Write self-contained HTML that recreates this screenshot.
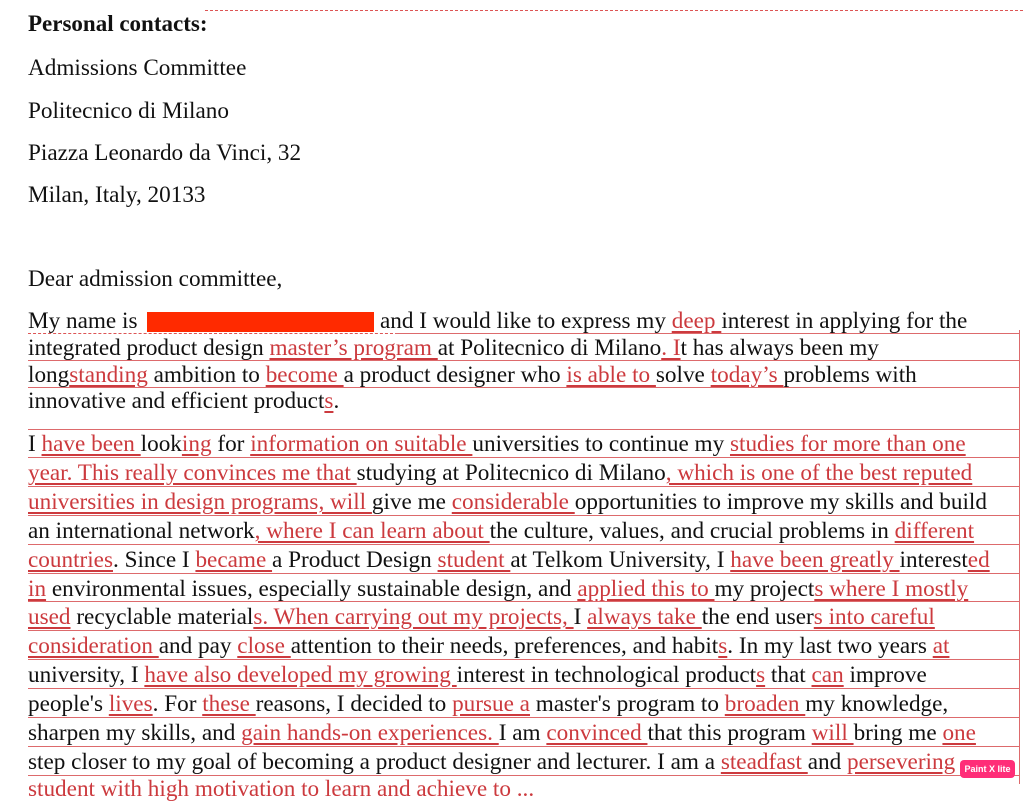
<!DOCTYPE html>
<html><head><meta charset="utf-8"><style>
body{margin:0;width:1023px;height:784px;overflow:hidden;background:#fff;font-family:"Liberation Serif",serif;font-size:23.2px;color:#111;position:relative}
.l{position:absolute;left:28px;white-space:nowrap;line-height:24px}
.r{color:#cc3a3e;text-decoration:underline;text-decoration-color:#cc3a3e;text-underline-offset:3px}
.u{position:absolute;left:28px;right:3px;height:1px;background:#dd6a6c}
</style></head><body>
<div style="position:absolute;left:205px;right:0;top:10px;border-top:1px dashed #dd5555"></div>
<div class="l" style="top:12px;font-size:23px"><b>Personal contacts:</b></div>
<div class="l" style="top:56px">Admissions Committee</div>
<div class="l" style="top:99px">Politecnico di Milano</div>
<div class="l" style="top:141px">Piazza Leonardo da Vinci, 32</div>
<div class="l" style="top:183px">Milan, Italy, 20133</div>
<div class="l" style="top:267px">Dear admission committee,</div>

<div class="l" style="top:309px">My name is </div>
<div class="l" style="top:309px;left:380px">and I would like to express my <span class="r">deep </span>interest in applying for the</div>
<div style="position:absolute;left:147px;top:312px;width:227px;height:20px;background:#ff2a00"></div>
<div style="position:absolute;left:28px;width:370px;top:333px;border-top:1px dashed #dd5555"></div>
<div class="u" style="left:395px;top:333px"></div>
<div class="l" style="top:336px">integrated product design <span class="r">master’s program </span>at Politecnico di Milano<span class="r">. I</span>t has always been my</div>
<div class="u" style="top:360px"></div>
<div class="l" style="top:363px">long<span class="r">standing</span> ambition to <span class="r">become </span>a product designer who <span class="r">is able to </span>solve <span class="r">today’s </span>problems with</div>
<div class="u" style="top:387px"></div>
<div class="l" style="top:389px">innovative and efficient product<span class="r">s</span>.</div>

<div class="u" style="top:429px"></div>
<div class="l" style="top:432px">I <span class="r">have been </span>look<span class="r">ing</span> for <span class="r">information on suitable </span>universities to continue my <span class="r">studies for more than one</span></div>
<div class="u" style="top:457px"></div>
<div class="l" style="top:461px"><span class="r">year. This really convinces me that </span>studying at Politecnico di Milano<span class="r">, which is one of the best reputed</span></div>
<div class="u" style="top:486px"></div>
<div class="l" style="top:490px"><span class="r">universities in design programs, will </span>give me <span class="r">considerable </span>opportunities to improve my skills and build</div>
<div class="u" style="top:515px"></div>
<div class="l" style="top:519px">an international network<span class="r">, where I can learn about </span>the culture, values, and crucial problems in <span class="r">different</span></div>
<div class="u" style="top:544px"></div>
<div class="l" style="top:548px"><span class="r">countries</span>. Since I <span class="r">became </span>a Product Design <span class="r">student </span>at Telkom University, I <span class="r">have been greatly </span>interest<span class="r">ed</span></div>
<div class="u" style="top:573px"></div>
<div class="l" style="top:577px"><span class="r">in</span> environmental issues, especially sustainable design, and <span class="r">applied this to </span>my project<span class="r">s where I mostly</span></div>
<div class="u" style="top:601px"></div>
<div class="l" style="top:605px"><span class="r">used</span> recyclable material<span class="r">s. When carrying out my projects, </span>I <span class="r">always take </span>the end user<span class="r">s into careful</span></div>
<div class="u" style="top:630px"></div>
<div class="l" style="top:634px"><span class="r">consideration </span>and pay <span class="r">close </span>attention to their needs, preferences, and habit<span class="r">s</span>. In my last two years <span class="r">at</span></div>
<div class="u" style="top:659px"></div>
<div class="l" style="top:663px">university, I <span class="r">have also developed my growing </span>interest in technological product<span class="r">s</span> that <span class="r">can</span> improve</div>
<div class="u" style="top:688px"></div>
<div class="l" style="top:692px">people's <span class="r">lives</span>. For <span class="r">these </span>reasons, I decided to <span class="r">pursue a</span> master's program to <span class="r">broaden </span>my knowledge,</div>
<div class="u" style="top:717px"></div>
<div class="l" style="top:721px">sharpen my skills, and <span class="r">gain hands-on experiences. </span>I am <span class="r">convinced </span>that this program <span class="r">will </span>bring me <span class="r">one</span></div>
<div class="u" style="top:746px"></div>
<div class="l" style="top:750px">step closer to my goal of becoming a product designer and lecturer. I am a <span class="r">steadfast </span>and <span class="r">persevering</span></div>
<div class="u" style="top:775px"></div>
<div class="l" style="top:777px;color:#cc3a3e">student with high motivation to learn and achieve to ...</div>
<div style="position:absolute;left:1019px;top:330px;width:1px;height:454px;background:#dd6a6c"></div>
<div style="position:absolute;left:960px;top:760px;width:55px;height:18px;background:#ff2d78;border-radius:4px;color:#fff;font:bold 9px 'Liberation Sans',sans-serif;line-height:18px;text-align:center">Paint X lite</div>
</body></html>
